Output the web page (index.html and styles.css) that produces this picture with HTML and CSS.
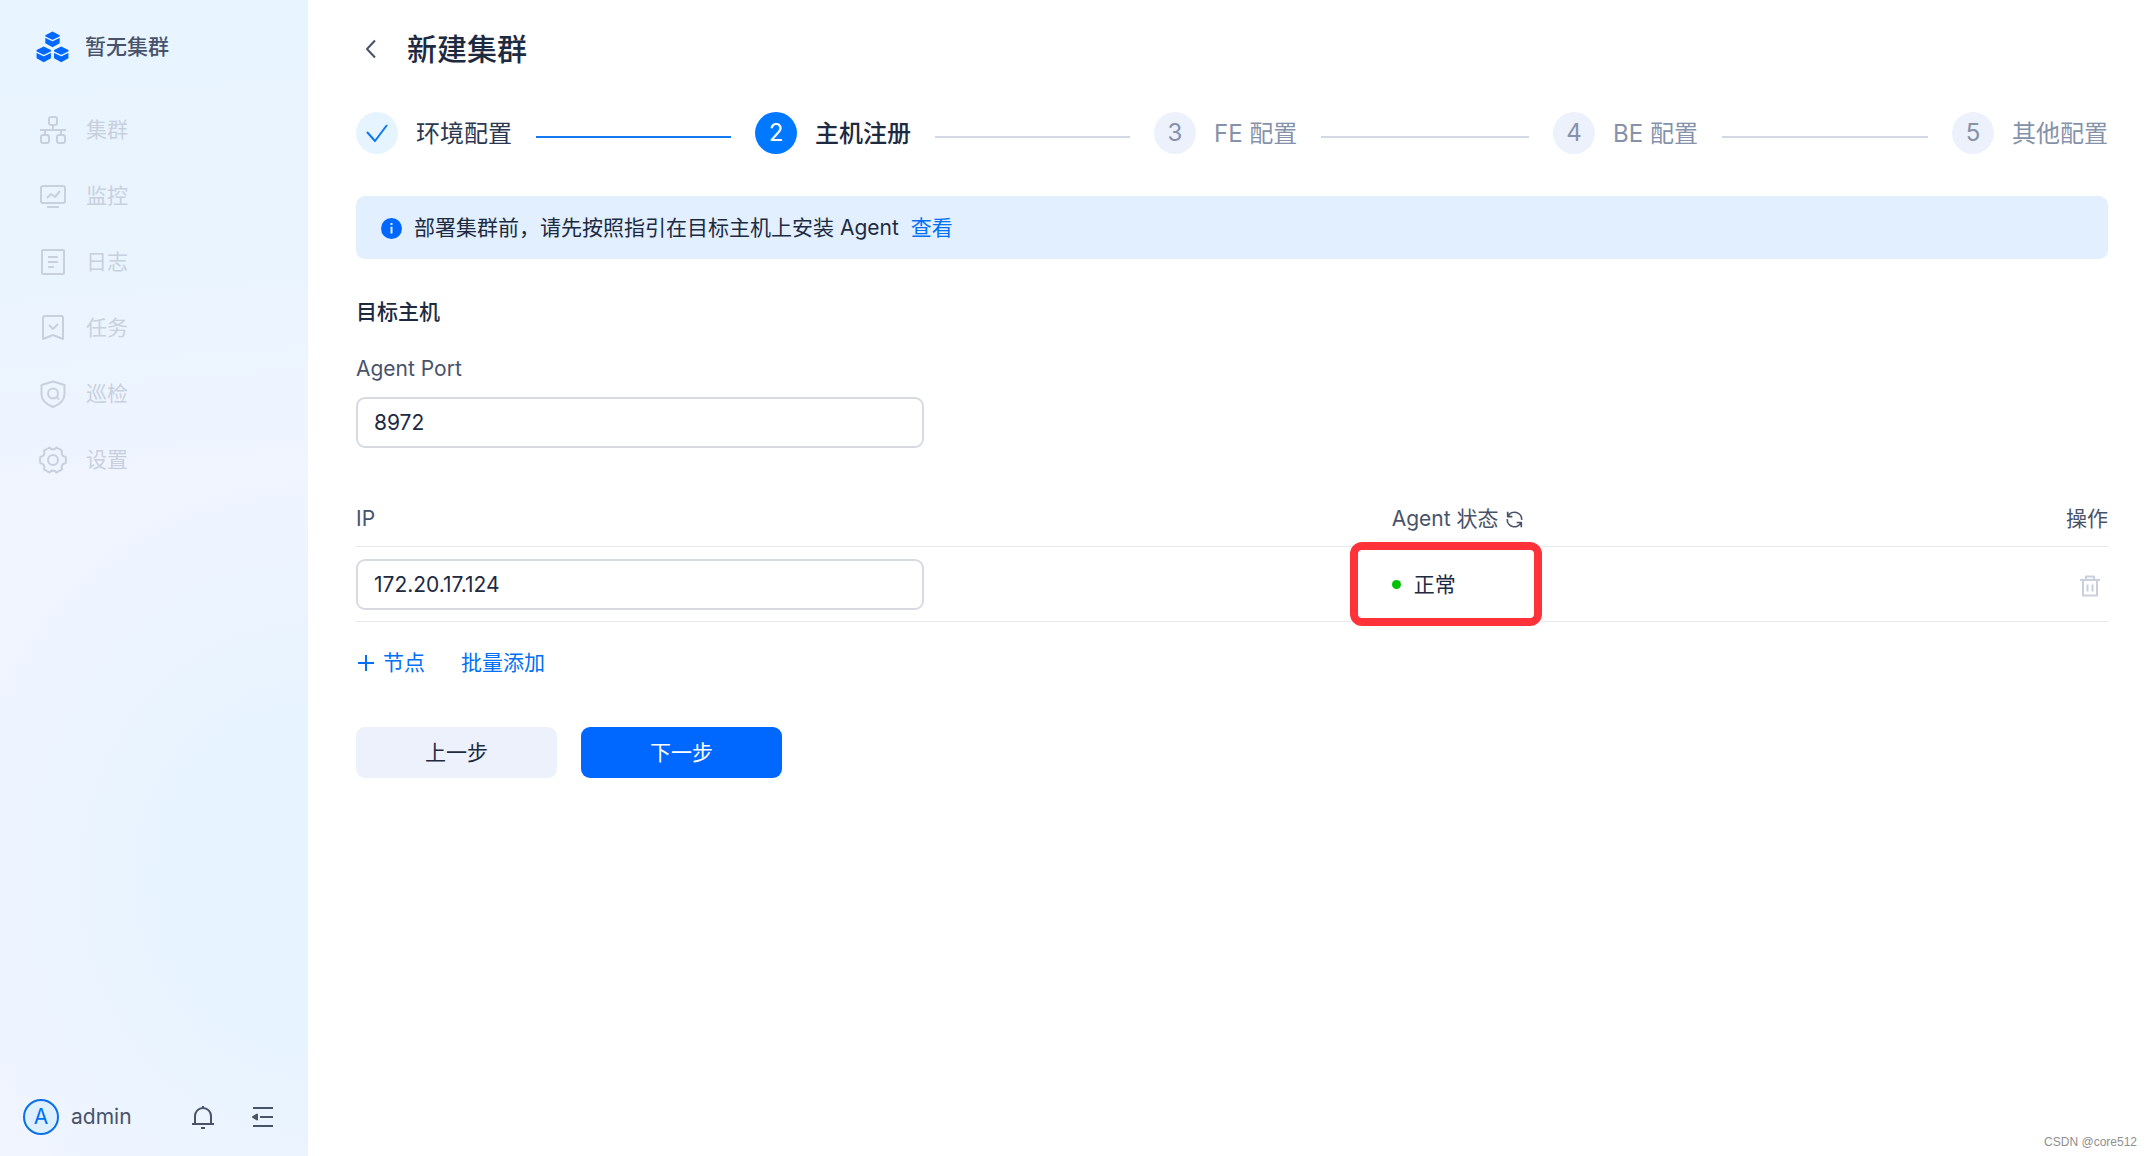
FILE: index.html
```html
<!DOCTYPE html>
<html lang="zh-CN">
<head>
<meta charset="utf-8">
<title>新建集群</title>
<link rel="stylesheet" href="styles.css">
</head>
<body>
<div class="app">
  <aside class="sidebar">
    <div class="brand">
      <svg class="brand-logo" viewBox="0 0 34 32" aria-hidden="true">
        <g id="cube">
          <path fill="#0068ff" d="M17 0 24.400 3.800V12.200L17 16.200 9.600 12.200V3.800Z"/>
          <path fill="none" stroke="#e8f4ff" stroke-width="1.400" d="M9 5.600 17 9.400 25 5.600"/>
        </g>
        <use href="#cube" x="-9" y="15.400"/>
        <use href="#cube" x="9" y="15.400"/>
      </svg>
      <span>暂无集群</span>
    </div>
    <nav class="menu">
      <a class="menu-item" href="#">
        <svg class="icon" viewBox="0 0 28 28"><rect x="10" y="1" width="8" height="8" rx="2"/><path d="M14 9v4M1 14h26M6 14v4M22 14v4"/><rect x="2" y="19" width="8" height="8" rx="2"/><rect x="18" y="19" width="8" height="8" rx="2"/></svg>
        <span>集群</span>
      </a>
      <a class="menu-item" href="#">
        <svg class="icon" viewBox="0 0 28 28"><rect x="2" y="4" width="24" height="17" rx="2"/><path d="M8 16l4-4 4 3 5-6M8 25h12"/></svg>
        <span>监控</span>
      </a>
      <a class="menu-item" href="#">
        <svg class="icon" viewBox="0 0 28 28"><rect x="3" y="2" width="22" height="24" rx="1"/><path d="M9 9h10M9 14h10M9 19h6"/></svg>
        <span>日志</span>
      </a>
      <a class="menu-item" href="#">
        <svg class="icon" viewBox="0 0 28 28"><path d="M4 25V4a2 2 0 0 1 2-2h16a2 2 0 0 1 2 2v21l-10-4zM10 11l4 4 5-5"/></svg>
        <span>任务</span>
      </a>
      <a class="menu-item" href="#">
        <svg class="icon" viewBox="0 0 28 28"><path d="M14 1.500 25.500 5v9c0 6-5 10.500-11.500 13C7.500 24.500 2.500 20 2.500 14V5z"/><circle cx="14" cy="13.500" r="5"/><path d="M17 16.500l3 3"/></svg>
        <span>巡检</span>
      </a>
      <a class="menu-item" href="#">
        <svg class="icon" viewBox="0 0 28 28"><path d="M10.400 1.500Q14 5.500 17.600 1.500L23 4.600Q21.400 9.800 26.600 10.900Q27.600 14 26.600 17.100Q21.400 18.200 23 23.400L17.600 26.500Q14 22.500 10.400 26.500L5 23.400Q6.600 18.200 1.400 17.100Q.4 14 1.400 10.900Q6.600 9.800 5 4.600Z"/><circle cx="14" cy="14" r="5"/></svg>
        <span>设置</span>
      </a>
    </nav>
    <div class="user-bar">
      <span class="avatar">A</span>
      <span class="user-name">admin</span>
      <button class="icon-button bell" type="button" aria-label="通知">
        <svg viewBox="0 0 24 24"><path d="M12 1v2M4 18v-7a8 8 0 0 1 16 0v7M1 19h22M10 23h4"/></svg>
      </button>
      <button class="icon-button" type="button" aria-label="收起菜单">
        <svg viewBox="0 0 24 24"><path d="M2 3h20M9 12h13M2 21h20"/><path class="solid" d="M2 12l4-2.500v5z"/></svg>
      </button>
    </div>
  </aside>

  <main class="content">
    <header class="page-head">
      <button class="back" type="button" aria-label="返回"><svg viewBox="0 0 12 20"><path d="M10 1.500 2 10l8 8.500"/></svg></button>
      <h1>新建集群</h1>
    </header>

    <ol class="steps">
      <li class="step done"><span class="badge"><svg viewBox="0 0 24 20"><path d="M2 9l8 9L22 2"/></svg></span><span class="step-name">环境配置</span></li>
      <li class="step current"><span class="badge">2</span><span class="step-name">主机注册</span></li>
      <li class="step"><span class="badge">3</span><span class="step-name">FE 配置</span></li>
      <li class="step"><span class="badge">4</span><span class="step-name">BE 配置</span></li>
      <li class="step"><span class="badge">5</span><span class="step-name">其他配置</span></li>
    </ol>

    <div class="notice">
      <svg class="notice-icon" viewBox="0 0 21 21" aria-hidden="true"><circle cx="10.500" cy="10.500" r="10.500" fill="#0068ff" stroke="none"/><path stroke="#e1efff" d="M10.500 8.800v6.700M10.500 5v2"/></svg>
      <p>部署集群前，请先按照指引在目标主机上安装 Agent</p>
      <a href="#">查看</a>
    </div>

    <form class="host-form">
      <h2>目标主机</h2>
      <label for="port">Agent Port</label>
      <input class="field" id="port" type="text" value="8972">

      <table class="hosts">
        <thead>
          <tr>
            <th class="col-ip" id="ip-head">IP</th>
            <th class="col-status"><span class="status-head">Agent 状态
              <svg viewBox="0 0 20 20" aria-hidden="true"><path d="M2.500 6A8.500 8.500 0 0 1 18.500 10.500M2 1v5.500h5.500M17.500 14A8.500 8.500 0 0 1 1.500 9.500M18 19v-5.500h-5.500"/></svg></span></th>
            <th class="col-action">操作</th>
          </tr>
        </thead>
        <tbody>
          <tr>
            <td><input class="field" type="text" value="172.20.17.124" aria-labelledby="ip-head"></td>
            <td class="col-status status-cell"><span class="status"><i class="dot"></i>正常</span><span class="highlight"></span></td>
            <td class="col-action"><button class="trash" type="button" aria-label="删除"><svg viewBox="0 0 20 22"><path d="M0 5h20M6 5V1.500h8V5M3 5v15.500h14V5M7.500 9.500v7M12.500 9.500v7"/></svg></button></td>
          </tr>
        </tbody>
      </table>

      <div class="add-links">
        <a href="#"><svg viewBox="0 0 18 18" aria-hidden="true"><path d="M9 1v16M1 9h16"/></svg>节点</a>
        <a href="#">批量添加</a>
      </div>
      <div class="actions">
        <button class="btn" type="button">上一步</button>
        <button class="btn primary" type="button">下一步</button>
      </div>
    </form>
  </main>
  <div class="watermark">CSDN @core512</div>
</div>
</body>
</html>
```

FILE: styles.css
```css
* {
  box-sizing: border-box;
}

body {
  margin: 0;
  font-family: Inter, "Noto Sans CJK SC", sans-serif;
  font-size: 21px;
  line-height: 32px;
  color: #1d2a3f;
  background: #fff;
}

h1, h2, p, ol {
  margin: 0;
  padding: 0;
}

a {
  color: #0070f5;
  text-decoration: none;
}

button {
  font: inherit;
  color: inherit;
  padding: 0;
  border: 0;
  background: none;
}

svg {
  display: block;
  flex: none;
  overflow: visible;
  fill: none;
  stroke: currentColor;
  stroke-width: 2;
  stroke-linejoin: round;
}

.app {
  display: flex;
  min-height: 100vh;
}

/* Sidebar */
.sidebar {
  display: flex;
  flex-direction: column;
  flex: none;
  width: 308px;
  padding: 31px 24px 21px 23px;
  color: #48536a;
  background:
    radial-gradient(ellipse 120% 36% at 100% 76%, #e7f3ff 40%, transparent 100%),
    linear-gradient(176deg, #e8f4ff 0%, #e9f4ff 22%, #f0f5ff 42%, #f0f5ff 100%);
}

.brand {
  display: flex;
  align-items: center;
  gap: 16px;
  padding-left: 13px;
  font-weight: 500;
}

.brand-logo {
  width: 33px;
  height: 32px;
  stroke: none;
}

.menu {
  display: flex;
  flex-direction: column;
  gap: 34px;
  padding: 51px 0 0 16px;
}

.menu-item {
  display: flex;
  align-items: center;
  gap: 19px;
  color: #c8d0de;
}

.icon {
  width: 28px;
  height: 28px;
}

.user-bar {
  display: flex;
  align-items: center;
  margin-top: auto;
}

.avatar {
  width: 36px;
  height: 36px;
  line-height: 32px;
  text-align: center;
  color: #0070f5;
  border: 2px solid #0a70e8;
  border-radius: 50%;
  background: #deefff;
}

.user-name {
  flex: 1;
  padding-left: 12px;
}

.icon-button svg {
  width: 24px;
  height: 24px;
}

.bell {
  margin-right: 36px;
}

.user-bar .icon-button:last-child {
  margin-right: 9px;
}

.solid {
  fill: currentColor;
}

/* Main column */
.content {
  flex: 1;
  min-width: 0;
  padding: 28px 44px 44px 48px;
}

.page-head {
  display: flex;
  align-items: center;
  gap: 30px;
  padding-left: 9px;
}

.page-head h1 {
  font-size: 30px;
  line-height: 42px;
  font-weight: 500;
}

.back svg {
  width: 12px;
  height: 20px;
  color: #48536a;
}

.steps {
  display: flex;
  gap: 24px;
  margin-top: 42px;
  list-style: none;
  font-size: 24px;
  color: #8592aa;
}

.step {
  display: flex;
  flex: 1 1 0;
  align-items: center;
  gap: 18px;
  white-space: nowrap;
}

.step:last-child {
  flex: none;
}

.step-name {
  padding-top: 2px;
}

.step:not(:last-child)::after {
  content: "";
  flex: 1;
  height: 2px;
  margin: 8px 0 0 6px;
  background: #d4d8e5;
}

.badge {
  display: flex;
  align-items: center;
  justify-content: center;
  width: 42px;
  height: 42px;
  border-radius: 50%;
  background: #ecf1fc;
}

.badge svg {
  width: 24px;
  height: 20px;
}

.done .badge {
  color: #0a78f5;
  background: #e6f4ff;
}

.done .step-name {
  color: #2b3850;
}

.step.done::after {
  background: #1479f0;
}

.current .badge {
  color: #fff;
  background: #0078ff;
}

.current .step-name {
  font-weight: 500;
  color: #1d2a3f;
}

.notice {
  display: flex;
  align-items: center;
  gap: 12px;
  margin-top: 42px;
  padding: 16px 25px 15px;
  border-radius: 9px;
  background: #e1efff;
}

.notice-icon {
  width: 21px;
  height: 21px;
}

/* Host form */
.host-form {
  padding-top: 37px;
}

.host-form h2 {
  font-size: 21px;
  line-height: 32px;
  font-weight: 500;
}

.host-form label {
  display: block;
  margin: 25px 0 12px;
  color: #48536a;
}

.field {
  display: block;
  width: 568px;
  max-width: 100%;
  height: 51px;
  padding: 0 16px;
  font: inherit;
  color: #1d2a3f;
  border: 2px solid #d7dae2;
  border-radius: 9px;
  background: #fff;
}

.hosts {
  width: 100%;
  margin-top: 55px;
  border-collapse: collapse;
  table-layout: fixed;
}

.hosts th {
  padding: 0 0 11px;
  font-weight: 400;
  text-align: left;
  color: #48536a;
}

.hosts td {
  padding: 12px 0 11px;
}

.hosts tr {
  border-bottom: 1px solid #e8eaf0;
}

.col-ip {
  width: 59%;
}

.hosts .col-status {
  padding-left: 2px;
}

.hosts .col-action {
  text-align: right;
}

.status-head {
  display: flex;
  align-items: center;
  gap: 8px;
}

.status-head svg {
  width: 17px;
  height: 17px;
}

.status-cell {
  position: relative;
}

.status {
  display: flex;
  align-items: center;
  gap: 13px;
}

.dot {
  width: 9px;
  height: 9px;
  border-radius: 50%;
  background: #00c200;
}

/* Frame drawn over the row borders around the status */
.highlight {
  position: absolute;
  top: -5px;
  bottom: -5px;
  left: -40px;
  width: 192px;
  border: 8px solid #ff3239;
  border-radius: 12px;
}

.trash {
  margin-right: 8px;
  color: #c9cfdd;
  vertical-align: middle;
}

.trash svg {
  width: 20px;
  height: 22px;
}

.add-links {
  display: flex;
  gap: 36px;
  margin-top: 25px;
}

.add-links a {
  display: flex;
  align-items: center;
  gap: 8px;
}

.add-links svg {
  width: 18px;
  height: 18px;
  margin-left: 1px;
}

.actions {
  display: flex;
  gap: 24px;
  margin-top: 48px;
}

.btn {
  width: 201px;
  height: 51px;
  border-radius: 9px;
  background: #ecf1fb;
}

.primary {
  color: #fff;
  background: #0068ff;
}

.watermark {
  position: absolute;
  right: 15px;
  bottom: 6px;
  font: 12px/16px "Liberation Sans", sans-serif;
  color: #8f8f8f;
}
```
